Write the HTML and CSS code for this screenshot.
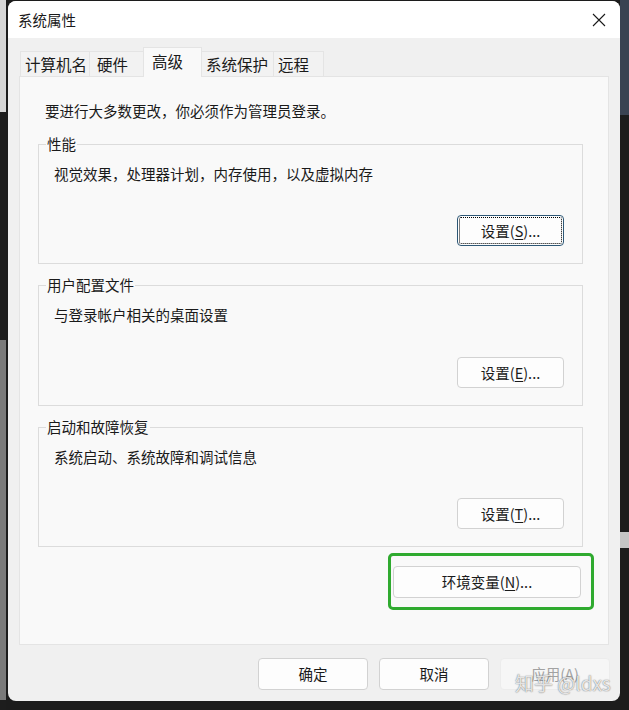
FILE: index.html
```html
<!DOCTYPE html>
<html lang="zh-CN">
<head>
<meta charset="utf-8">
<title>系统属性</title>
<link rel="stylesheet" href="styles.css">
</head>
<body>
<div class="window">
  <div class="titlebar">
    <span class="title">系统属性</span>
    <svg class="close" width="14" height="14" viewBox="0 0 14 14"><path d="M1 1 L13 13 M13 1 L1 13" stroke="#1a1a1a" stroke-width="1.1" fill="none"/></svg>
  </div>
  <div class="tabs">
    <div class="tab t1">计算机名</div>
    <div class="tab t2">硬件</div>
    <div class="tab t3 active">高级</div>
    <div class="tab t4">系统保护</div>
    <div class="tab t5">远程</div>
  </div>
  <div class="panel">
    <p class="intro">要进行大多数更改，你必须作为管理员登录。</p>
    <fieldset class="group g1">
      <legend>性能</legend>
      <p class="desc">视觉效果，处理器计划，内存使用，以及虚拟内存</p>
      <div class="row"><button class="btn focus">设置(<u>S</u>)...</button></div>
    </fieldset>
    <fieldset class="group g2">
      <legend>用户配置文件</legend>
      <p class="desc">与登录帐户相关的桌面设置</p>
      <div class="row"><button class="btn">设置(<u>E</u>)...</button></div>
    </fieldset>
    <fieldset class="group g3">
      <legend>启动和故障恢复</legend>
      <p class="desc">系统启动、系统故障和调试信息</p>
      <div class="row"><button class="btn">设置(<u>T</u>)...</button></div>
    </fieldset>
    <div class="envrow">
      <div class="highlight"><button class="btn env">环境变量(<u>N</u>)...</button></div>
    </div>
  </div>
  <div class="footer">
    <button class="btn foot">确定</button>
    <button class="btn foot">取消</button>
    <button class="btn foot disabled">应用(A)</button>
  </div>
  <div class="watermark">知乎 @ldxs</div>
</div>
</body>
</html>
```
FILE: styles.css
```css
html, body {
  margin: 0;
  padding: 0;
}
body {
  width: 629px;
  height: 710px;
  overflow: hidden;
  font-family: "Noto Sans CJK SC", "Microsoft YaHei", sans-serif;
  color: #1a1a1a;
  background:
    linear-gradient(to bottom, #d6d6d6 0 112px, #1d1d1d 112px 340px, #7a7a7a 340px 700px, #1d1d1d 700px) left top / 6px 100% no-repeat,
    linear-gradient(to bottom, #3a4352 0 115px, #1c1c1c 115px 532px, #c4c4c4 532px 548px, #1c1c1c 548px) right top / 9px 100% no-repeat,
    #1c1c1c;
  padding-top: 1px;
  box-sizing: border-box;
}
.window {
  position: relative;
  margin-left: 8px;
  width: 612px;
  height: 700px;
  background: #f0f0f0;
  border-radius: 8px;
  overflow: hidden;
}
.titlebar {
  height: 37px;
  background: #ffffff;
  display: flex;
  align-items: center;
  justify-content: space-between;
  padding: 0 14px 0 10px;
}
.title {
  font-size: 14.5px;
  line-height: 20px;
  margin-top: 1px;
}
.close {
  margin-top: 1px;
}
.tabs {
  display: flex;
  align-items: flex-end;
  height: 29px;
  margin-top: 9px;
  padding-left: 12px;
}
.tab {
  height: 25px;
  box-sizing: border-box;
  padding: 0;
  font-size: 15.5px;
  line-height: 25px;
  white-space: nowrap;
  background: #f2f2f2;
  border: 1px solid #e4e4e4;
  border-bottom: none;
  margin-right: -1px;
}
.t1 { width: 70px; padding-left: 4px; }
.t2 { width: 55px; padding-left: 7px; }
.t3 { width: 59px; padding-left: 8px; }
.t4 { width: 73px; padding-left: 4px; }
.t5 { width: 51px; padding-left: 4px; }
.tab.active {
  line-height: 26px;
  background: #f9f9f9;
  border-color: #e4e4e4;
  position: relative;
  z-index: 1;
  margin-bottom: -1px;
  height: 30px;
}
.panel {
  margin: 0 11px;
  height: 569px;
  box-sizing: border-box;
  background: #f9f9f9;
  border: 1px solid #e4e4e4;
  padding: 24px 25px 0 18px;
}
.intro {
  margin: 0 0 13px 7px;
  font-size: 14.5px;
  line-height: 20px;
}
.group {
  margin: 0 0 11px 0;
  border: 1px solid #dcdcdc;
  padding: 10px 18px 17px 15px;
}
.group legend {
  font-size: 14.5px;
  line-height: 20px;
  padding: 0 1px;
  margin-left: -8px;
}
.desc {
  margin: 0;
  font-size: 14.5px;
  line-height: 20px;
}
.row {
  display: flex;
  justify-content: flex-end;
  margin-top: 31px;
}
.g2 .row {
  margin-top: 32px;
}
.btn {
  font-family: "Noto Sans CJK SC", "Microsoft YaHei", sans-serif;
  font-size: 14.5px;
  color: #1a1a1a;
  background: #fdfdfd;
  border: 1px solid #d2d2d2;
  border-radius: 4px;
  height: 31px;
  width: 107px;
  padding: 0;
  line-height: 20px;
  box-sizing: border-box;
}
.btn u {
  text-underline-offset: 2px;
}
.btn.focus {
  border-color: #2d5775;
  outline: 1px dotted #000;
  outline-offset: -3px;
}
.envrow {
  display: flex;
  justify-content: flex-end;
  margin-top: -5px;
  margin-right: -11px;
}
.highlight {
  border: 3px solid #2faa2f;
  border-radius: 5px;
  padding: 10px 10px 9px 2px;
}
.btn.env {
  width: 188px;
  height: 32px;
}
.footer {
  display: flex;
  justify-content: flex-end;
  gap: 11px;
  padding: 13px 10px 0 0;
}
.btn.foot {
  width: 110px;
  height: 32px;
  font-size: 14.5px;
}
.btn.disabled {
  color: #a2a2a2;
  background: #f6f6f6;
  border-color: #ececec;
}
.watermark {
  position: absolute;
  left: 507px;
  top: 669px;
  white-space: nowrap;
  font-family: "Noto Sans CJK SC", sans-serif;
  font-size: 19px;
  line-height: 26px;
  color: rgba(255, 255, 255, 0.82);
  text-shadow: 0 0 1px rgba(0, 0, 0, 0.55), 0 0 2px rgba(0, 0, 0, 0.2);
}
```
